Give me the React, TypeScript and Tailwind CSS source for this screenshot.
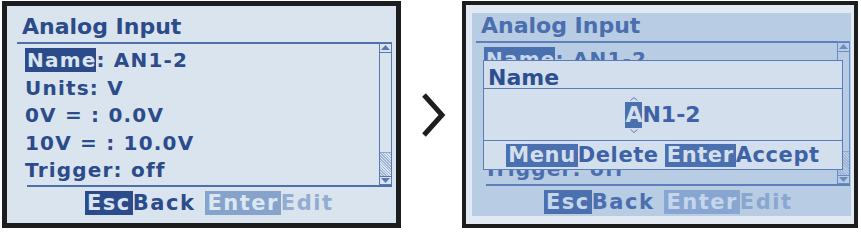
import React from 'react';

type Tone = {
  text: string;
  rule: string;
  hiBg: string;
  hiFg: string;
  dimBg: string;
  dimFg: string;
  dimText: string;
};

const leftTone: Tone = {
  text: 'text-[#2b4b8b]',
  rule: 'bg-[#4f6fab]',
  hiBg: 'bg-[#2b4b8b]',
  hiFg: 'text-[#dbe5ef]',
  dimBg: 'bg-[#86a3cb]',
  dimFg: 'text-[#dde7f1]',
  dimText: 'text-[#93acd1]',
};

const rightTone: Tone = {
  text: 'text-[#4a6eae]',
  rule: 'bg-[#5d80bb]',
  hiBg: 'bg-[#4b70b0]',
  hiFg: 'text-[#c7d7ea]',
  dimBg: 'bg-[#87a6d1]',
  dimFg: 'text-[#c6d6ea]',
  dimText: 'text-[#88a6d0]',
};

const font = "font-['DejaVu_Sans',sans-serif] font-bold";

const Scrollbar: React.FC<{ border: string }> = ({ border }) => (
  <div className={`w-[13px] mr-[4px] -mt-[2px] flex flex-col border ${border}`}>
    <div className={`h-[10px] flex items-center justify-center border-b ${border}`}>
      <svg width="9" height="5" viewBox="0 0 9 5">
        <polygon points="0,5 4.5,0 9,5" className="fill-current" />
      </svg>
    </div>
    <div className="flex-1" />
    <div className="h-[24px] bg-[repeating-linear-gradient(45deg,#9fb4d4_0px,#9fb4d4_1px,transparent_1px,transparent_2px)] border-t border-[#8ea7cd]" />
    <div className={`h-[8px] flex items-center justify-center border-t ${border}`}>
      <svg width="9" height="5" viewBox="0 0 9 5">
        <polygon points="0,0 4.5,5 9,0" className="fill-current" />
      </svg>
    </div>
  </div>
);

const Screen: React.FC<{ tone: Tone; border: string; children?: React.ReactNode }> = ({ tone, border, children }) => {
  const rows = ['Units: V', '0V = : 0.0V', '10V = : 10.0V', 'Trigger: off'];
  return (
    <div className={`relative h-full flex flex-col ${font} ${tone.text}`}>
      <div className="h-[36px] pl-[15px] pt-[10px] text-[22px] leading-none">Analog Input</div>
      <div className={`h-[2px] ml-[10px] mr-[4px] ${tone.rule}`} />
      <div className="h-[141px] flex">
        <div className="flex-1 pl-[18px] text-[20px] tracking-[1.2px]">
          <div className="h-[27.5px] pt-[6px] leading-none">
            <span className={`${tone.hiBg} ${tone.hiFg} pl-[2px]`}>Name</span>: AN1-2
          </div>
          {rows.map(r => (
            <div key={r} className="h-[27.5px] pt-[6px] leading-none whitespace-pre">
              {r}
            </div>
          ))}
        </div>
        <Scrollbar border={border} />
      </div>
      <div className={`h-[2px] ml-[20px] mr-[4px] ${tone.rule}`} />
      <div className="flex-1 pl-[78px] pt-[6px] text-[21px] tracking-[1.5px] leading-none whitespace-pre">
        <span className={`${tone.hiBg} ${tone.hiFg} px-[2px]`}>Esc</span>
        <span className="mr-[10px]">Back</span>
        <span className={`${tone.dimBg} ${tone.dimFg} px-[2px]`}>Enter</span>
        <span className={tone.dimText}>Edit</span>
      </div>
      {children}
    </div>
  );
};

const NameDialog: React.FC = () => (
  <div className={`absolute left-[17px] top-[55px] w-[360px] h-[110px] flex flex-col bg-[#d3dfec] border-[1.5px] border-[#5b7db7] ${font}`}>
    <div className="h-[28px] pl-[4px] pt-[6px] text-[22px] leading-none text-[#2c4f92] border-b-[1.5px] border-[#5b7db7]">
      Name
    </div>
    <div className="h-[52px] flex items-center justify-center text-[22px] leading-none text-[#3d62a6] border-b-[1.5px] border-[#5b7db7]">
      <div className="flex flex-col items-center">
        <svg width="8" height="4" viewBox="0 0 8 4" className="mb-[1px]">
          <polyline points="0.5,3.5 4,0.5 7.5,3.5" fill="none" stroke="#5b7db7" strokeWidth="1" />
        </svg>
        <span className="flex items-center h-[26px] bg-[#4b70b0] text-[#d3dfec]">A</span>
        <svg width="8" height="4" viewBox="0 0 8 4" className="mt-[1px]">
          <polyline points="0.5,0.5 4,3.5 7.5,0.5" fill="none" stroke="#5b7db7" strokeWidth="1" />
        </svg>
      </div>
      <span>N1-2</span>
    </div>
    <div className="flex-1 flex items-center justify-center text-[21px] tracking-[0.6px] leading-none text-[#3d62a6]">
      <span className="bg-[#4b70b0] text-[#d3dfec] px-[2px] py-[1px]">Menu</span>
      <span className="mr-[6px]">Delete</span>
      <span className="bg-[#4b70b0] text-[#d3dfec] px-[2px] py-[1px]">Enter</span>
      <span>Accept</span>
    </div>
  </div>
);

export default function App() {
  return (
    <div className="w-[861px] h-[233px] bg-white flex items-start pt-[1px] pl-[2px]">
      <div className="w-[399px] h-[227px] border-[5px] border-[#1c1d1f] bg-[#d9e4ee]">
        <Screen tone={leftTone} border="border-[#5a78b0] text-[#5a78b0]" />
      </div>
      <div className="w-[61px] h-[227px] flex items-center justify-center">
        <svg width="30" height="50" viewBox="0 0 30 50">
          <polyline points="7,5 25,25 7,45" fill="none" stroke="#1e1e20" strokeWidth="5" strokeLinejoin="miter" />
        </svg>
      </div>
      <div className="w-[396px] h-[227px] border-[4px] border-[#1c1d1f] bg-[#b8cce3] shadow-[inset_6px_8px_0_#e2e9f2,inset_-3px_-8px_0_#e2e9f2]">
        <Screen tone={rightTone} border="border-[#6a8cc3] text-[#6a8cc3]">
          <NameDialog />
        </Screen>
      </div>
    </div>
  );
}
